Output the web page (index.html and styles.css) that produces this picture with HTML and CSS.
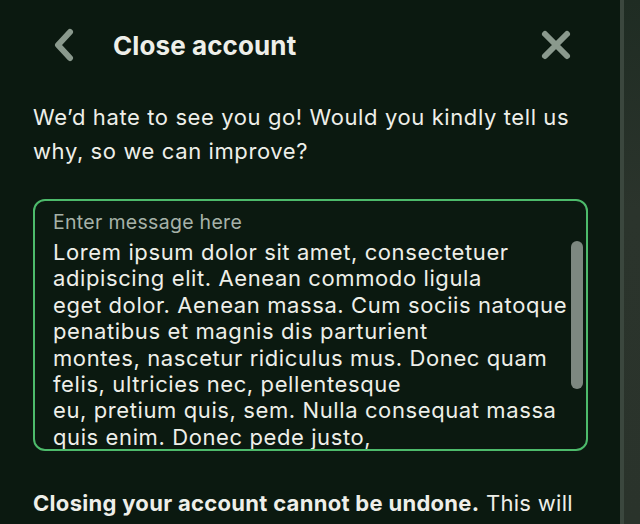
FILE: index.html
```html
<!DOCTYPE html>
<html>
<head>
  <title>Close account</title>
  <link rel="stylesheet" href="styles.css">
</head>
<body>
  <div class="screen">
    <div class="panel">
      <div class="header">
        <button class="icon-btn back" type="button" aria-label="Back">
          <svg width="22" height="34" viewBox="0 0 22 34">
            <path d="M17 4 L5 17 L17 30" fill="none" stroke="#8a998d" stroke-width="6" stroke-linecap="round" stroke-linejoin="round"/>
          </svg>
        </button>
        <h1>Close account</h1>
        <button class="icon-btn close" type="button" aria-label="Close">
          <svg width="32" height="32" viewBox="0 0 32 32">
            <path d="M5 5 L27 27 M27 5 L5 27" fill="none" stroke="#8a998d" stroke-width="6" stroke-linecap="round"/>
          </svg>
        </button>
      </div>

      <p class="intro">We’d hate to see you go! Would you kindly tell us why, so we can improve?</p>

      <div class="message-box">
        <label class="message-label" for="message">Enter message here</label>
        <div class="message-text" id="message">Lorem ipsum dolor sit amet, consectetuer
adipiscing elit. Aenean commodo ligula
eget dolor. Aenean massa. Cum sociis natoque
penatibus et magnis dis parturient
montes, nascetur ridiculus mus. Donec quam
felis, ultricies nec, pellentesque
eu, pretium quis, sem. Nulla consequat massa
quis enim. Donec pede justo,</div>
        <div class="scroll-thumb"></div>
      </div>

      <p class="warning"><strong>Closing your account cannot be undone.</strong> This will</p>
    </div>
    <div class="page-scroll"></div>
  </div>
</body>
</html>
```

FILE: styles.css
```css
html, body {
  margin: 0;
  height: 100%;
  overflow: hidden;
}

body {
  font-family: Inter, "Noto Sans", sans-serif;
  background-color: #0b1910;
  color: #eeefe9;
}

.screen {
  display: flex;
  height: 100%;
}

.panel {
  flex: 1;
  padding: 0 32px 0 33px;
}

.header {
  display: flex;
  align-items: center;
  height: 90px;
}

.icon-btn {
  background: none;
  border: none;
  padding: 0;
  display: flex;
  cursor: pointer;
}

.back {
  margin-left: 20px;
}

.close {
  margin-left: auto;
  margin-right: 16px;
}

h1 {
  margin: 0 0 0 38px;
  font-size: 26px;
  font-weight: 700;
  letter-spacing: 0.1px;
}

.intro {
  margin: 10px 0 31px;
  font-size: 22px;
  line-height: 34px;
  letter-spacing: 0.6px;
  max-width: 550px;
}

.message-box {
  position: relative;
  height: 239px;
  border: 2px solid #4dbb6b;
  border-radius: 12px;
  padding: 9px 4px 0 18px;
  overflow: hidden;
}

.message-label {
  display: block;
  font-size: 19.5px;
  line-height: 24px;
  letter-spacing: 0.3px;
  color: #a6b2a8;
  margin-bottom: 5px;
}

.message-text {
  white-space: pre;
  font-size: 22px;
  line-height: 26.4px;
  letter-spacing: 0.6px;
}

.scroll-thumb {
  position: absolute;
  right: 3px;
  top: 40px;
  width: 12px;
  height: 148px;
  border-radius: 6px;
  background-color: #7d8880;
}

.warning {
  margin: 35px 0 0;
  font-size: 22px;
  line-height: 34px;
  letter-spacing: 0.3px;
}

.page-scroll {
  width: 16px;
  border-left: 4px solid #3b473e;
  background: linear-gradient(#1f2c23, #2b342c 40%, #2a332b);
}
```
